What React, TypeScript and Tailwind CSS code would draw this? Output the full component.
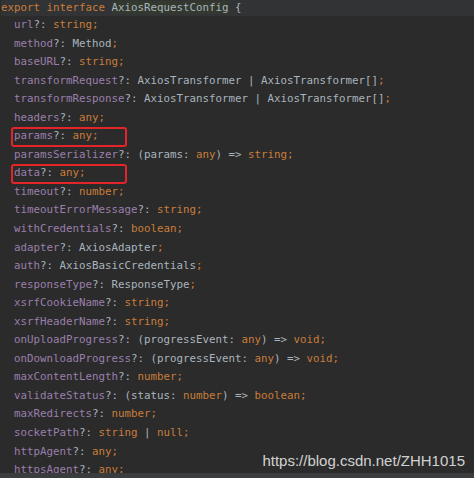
type Kind = "k" | "p" | "t" | "s";
type Tok = [string, Kind];

const kindClass: Record<Kind, string> = {
  k: "text-[#c97d3a]",
  p: "text-[#9a7fab]",
  t: "text-[#a9b4be]",
  s: "text-[#c97d3a]",
};

const prop = (name: string, rest: Tok[]): Tok[] => [
  ["  ", "t"],
  [name, "p"],
  ["?: ", "t"],
  ...rest,
  [";", "s"],
];

const lines: { toks: Tok[]; boxed?: boolean }[] = [
  { toks: prop("url", [["string", "k"]]) },
  { toks: prop("method", [["Method", "t"]]) },
  { toks: prop("baseURL", [["string", "k"]]) },
  { toks: prop("transformRequest", [["AxiosTransformer | AxiosTransformer[]", "t"]]) },
  { toks: prop("transformResponse", [["AxiosTransformer | AxiosTransformer[]", "t"]]) },
  { toks: prop("headers", [["any", "k"]]) },
  { toks: prop("params", [["any", "k"]]), boxed: true },
  {
    toks: prop("paramsSerializer", [
      ["(params: ", "t"],
      ["any", "k"],
      [") => ", "t"],
      ["string", "k"],
    ]),
  },
  { toks: prop("data", [["any", "k"]]), boxed: true },
  { toks: prop("timeout", [["number", "k"]]) },
  { toks: prop("timeoutErrorMessage", [["string", "k"]]) },
  { toks: prop("withCredentials", [["boolean", "k"]]) },
  { toks: prop("adapter", [["AxiosAdapter", "t"]]) },
  { toks: prop("auth", [["AxiosBasicCredentials", "t"]]) },
  { toks: prop("responseType", [["ResponseType", "t"]]) },
  { toks: prop("xsrfCookieName", [["string", "k"]]) },
  { toks: prop("xsrfHeaderName", [["string", "k"]]) },
  {
    toks: prop("onUploadProgress", [
      ["(progressEvent: ", "t"],
      ["any", "k"],
      [") => ", "t"],
      ["void", "k"],
    ]),
  },
  {
    toks: prop("onDownloadProgress", [
      ["(progressEvent: ", "t"],
      ["any", "k"],
      [") => ", "t"],
      ["void", "k"],
    ]),
  },
  { toks: prop("maxContentLength", [["number", "k"]]) },
  {
    toks: prop("validateStatus", [
      ["(status: ", "t"],
      ["number", "k"],
      [") => ", "t"],
      ["boolean", "k"],
    ]),
  },
  { toks: prop("maxRedirects", [["number", "k"]]) },
  {
    toks: prop("socketPath", [
      ["string", "k"],
      [" | ", "t"],
      ["null", "k"],
    ]),
  },
  { toks: prop("httpAgent", [["any", "k"]]) },
  { toks: prop("httpsAgent", [["any", "k"]]) },
];

export default function App() {
  return (
    <div className="relative w-[474px] h-[478px] flex flex-col bg-[#2b2b2b] overflow-hidden">
      {/* Code */}
      <div
        className="flex-1 overflow-hidden pl-[1px] text-[10.8px] whitespace-pre"
        style={{ fontFamily: '"DejaVu Sans Mono", "Liberation Mono", monospace' }}
      >
        <div className="h-[16px] leading-[16px] bg-[#313335]">
          <span className="text-[#c97d3a]">export interface </span>
          <span className="text-[#a9b4be] bg-[#33392f]">AxiosRequestConfig</span>
          <span className="text-[#a9b4be]"> {"{"}</span>
        </div>
        {lines.map((line, i) => (
          <div key={i} className="relative h-[18.55px] leading-[18.55px]">
            {line.toks.map(([text, kind], j) => (
              <span key={j} className={kindClass[kind]}>
                {text}
              </span>
            ))}
            {line.boxed && (
              <div className="absolute left-[10px] top-0 w-[116px] h-[20px] border-[2.5px] border-[#e3252a] rounded-[3px]" />
            )}
          </div>
        ))}
      </div>

      {/* Bottom strip */}
      <div className="h-[5px] bg-[#3a3c3e]" />

      {/* Watermark */}
      <div
        className="absolute top-[453px] right-[9px] text-[15px] leading-none text-[#e6e6e6]/90"
        style={{ fontFamily: '"Liberation Sans", Arial, sans-serif' }}
      >
        https://blog.csdn.net/ZHH1015
      </div>
    </div>
  );
}
